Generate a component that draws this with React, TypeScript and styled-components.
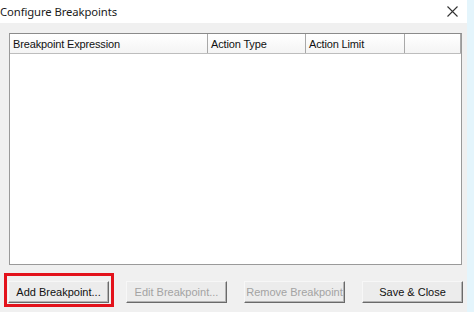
import React from 'react';
import styled, { createGlobalStyle } from 'styled-components';

const GlobalStyle = createGlobalStyle`
  html, body {
    margin: 0;
    padding: 0;
    background: #f0f0f0;
  }
`;

const Screen = styled.div`
  display: flex;
  width: 474px;
  height: 312px;
  overflow: hidden;
`;

const Dialog = styled.div`
  display: flex;
  flex-direction: column;
  width: 467px;
  background: #f0f0f0;
`;

const Edge = styled.div`
  flex: 1;
  background: #e4f5fc;
`;

const TitleBar = styled.div`
  display: flex;
  align-items: center;
  justify-content: space-between;
  height: 23px;
  padding: 0 9px 0 0;
  background: #ffffff;
`;

const Title = styled.span`
  font-family: 'Noto Sans', 'Open Sans', sans-serif;
  font-size: 11.3px;
  color: #1a1a1a;
  letter-spacing: -0.1px;
`;

const Body = styled.div`
  display: flex;
  flex-direction: column;
  flex: 1;
  padding: 10px 0 0 9px;
`;

const ListBox = styled.div`
  width: 451px;
  height: 230px;
  border: 1px solid #9a9a9a;
  border-top-color: #8a8a8a;
  background: #ffffff;
`;

const Header = styled.div`
  display: grid;
  grid-template-columns: 198px 98px 99px 1fr;
  height: 19px;
  border-bottom: 1px solid #bdbdbd;
  background: linear-gradient(#ffffff, #f4f4f4);
`;

const HeaderCell = styled.div`
  display: flex;
  align-items: center;
  padding-left: 3px;
  border-right: 1px solid #a8a8a8;
  font-family: 'Liberation Sans', Arial, sans-serif;
  font-size: 11px;
  letter-spacing: -0.15px;
  color: #111;
`;

const ButtonRow = styled.div`
  display: flex;
  gap: 17px;
  margin-top: 16px;
  margin-left: -1px;
`;

const Highlight = styled.div`
  position: relative;
  &::after {
    content: '';
    position: absolute;
    left: -4px;
    top: -8px;
    right: -5px;
    bottom: -4px;
    border: 3px solid #e3121b;
    pointer-events: none;
  }
`;

const Button = styled.button<{ disabled?: boolean }>`
  width: 101px;
  height: 22px;
  padding: 0;
  background: #ececec;
  border: 1px solid;
  border-color: #f7f7f7 #6a6a6a #6a6a6a #f7f7f7;
  box-shadow: inset -1px -1px 0 #b4b4b4;
  font-family: 'Liberation Sans', Arial, sans-serif;
  font-size: 11px;
  color: ${(p) => (p.disabled ? '#a3a3a3' : '#111')};
  cursor: default;
`;

const CloseIcon = () => (
  <svg width="11" height="11" viewBox="0 0 11 11">
    <path d="M0.5 0.5 L10.5 10.5 M10.5 0.5 L0.5 10.5" stroke="#333" strokeWidth="1.1" />
  </svg>
);

export default function App() {
  return (
    <Screen>
      <GlobalStyle />
      <Dialog>
        <TitleBar>
          <Title>Configure Breakpoints</Title>
          <CloseIcon />
        </TitleBar>
        <Body>
          <ListBox>
            <Header>
              <HeaderCell>Breakpoint Expression</HeaderCell>
              <HeaderCell>Action Type</HeaderCell>
              <HeaderCell>Action Limit</HeaderCell>
              <HeaderCell />
            </Header>
          </ListBox>
          <ButtonRow>
            <Highlight>
              <Button>Add Breakpoint...</Button>
            </Highlight>
            <Button disabled>Edit Breakpoint...</Button>
            <Button disabled>Remove Breakpoint</Button>
            <Button>Save &amp; Close</Button>
          </ButtonRow>
        </Body>
      </Dialog>
      <Edge />
    </Screen>
  );
}
